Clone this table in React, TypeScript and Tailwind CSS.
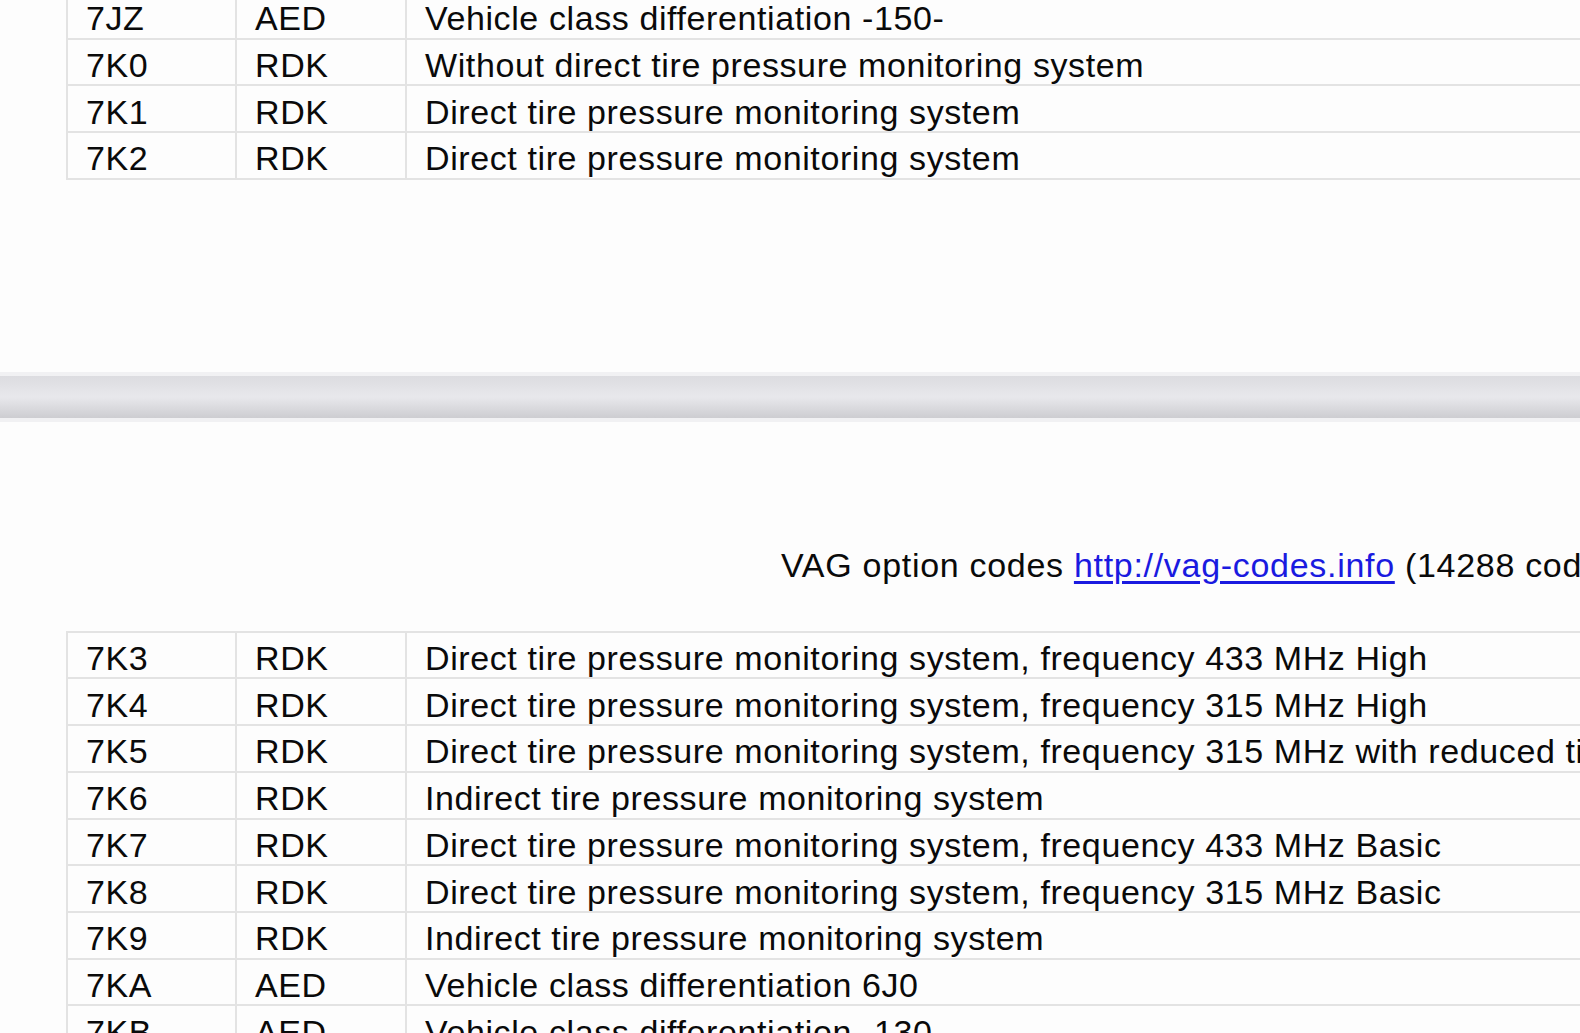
const topRows = [
  ["7JZ", "AED", "Vehicle class differentiation -150-"],
  ["7K0", "RDK", "Without direct tire pressure monitoring system"],
  ["7K1", "RDK", "Direct tire pressure monitoring system"],
  ["7K2", "RDK", "Direct tire pressure monitoring system"],
];

const bottomRows = [
  ["7K3", "RDK", "Direct tire pressure monitoring system, frequency 433 MHz High"],
  ["7K4", "RDK", "Direct tire pressure monitoring system, frequency 315 MHz High"],
  ["7K5", "RDK", "Direct tire pressure monitoring system, frequency 315 MHz with reduced tire pressure warning"],
  ["7K6", "RDK", "Indirect tire pressure monitoring system"],
  ["7K7", "RDK", "Direct tire pressure monitoring system, frequency 433 MHz Basic"],
  ["7K8", "RDK", "Direct tire pressure monitoring system, frequency 315 MHz Basic"],
  ["7K9", "RDK", "Indirect tire pressure monitoring system"],
  ["7KA", "AED", "Vehicle class differentiation 6J0"],
  ["7KB", "AED", "Vehicle class differentiation -130-"],
];

const CodeTable = ({ rows, className }: { rows: string[][]; className?: string }) => (
  <div className={"ml-[66px] w-[1700px] border-l-2 border-t-2 border-[#e3e3e3] " + (className ?? "")}>
    {rows.map(([code, group, text]) => (
      <div
        key={code}
        className="grid grid-cols-[169px_170px_1fr] h-[46.7px] border-b-2 border-[#e3e3e3]"
      >
        <div className="flex items-center pt-[6px] pl-[18px] border-r-2 border-[#e3e3e3]">{code}</div>
        <div className="flex items-center pt-[6px] pl-[18px] border-r-2 border-[#e3e3e3]">{group}</div>
        <div className="flex items-center pt-[6px] pl-[18px] whitespace-nowrap">{text}</div>
      </div>
    ))}
  </div>
);

export default function App() {
  return (
    <div
      className="w-[1580px] h-[1033px] overflow-hidden bg-[#fdfdfd] text-[#0a0a0a] text-[34px] tracking-[0.6px] leading-none"
      style={{ fontFamily: '"Liberation Sans", Arial, sans-serif' }}
    >
      {/* page 1 tail */}
      <CodeTable rows={topRows} className="-mt-[9px]" />

      {/* page break */}
      <div className="mt-[192px] h-[50px] flex flex-col">
        <div className="h-[4px] bg-[#f1f1f3]" />
        <div className="flex-1 bg-gradient-to-b from-[#dcdce0] via-[#e8e8ec] to-[#cdcdd1]" />
        <div className="h-[4px] bg-[#f1f1f3]" />
      </div>

      {/* page 2 header */}
      <div className="mt-[124px] pl-[781px] whitespace-nowrap leading-[38px] h-[38px] tracking-[0.7px]">
        VAG option codes{" "}
        <a href="#" className="text-[#1a1ae0] underline underline-offset-[4px]">
          http://vag-codes.info
        </a>{" "}
        (14288 codes)
      </div>

      <CodeTable rows={bottomRows} className="mt-[47px]" />
    </div>
  );
}
